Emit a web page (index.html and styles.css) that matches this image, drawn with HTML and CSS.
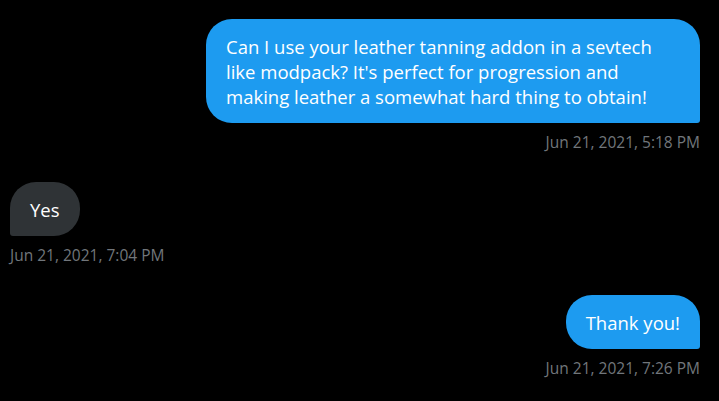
FILE: index.html
```html
<!DOCTYPE html>
<html lang="en">
<head>
    <meta charset="UTF-8">
    <meta name="viewport" content="width=device-width, initial-scale=1.0">
    <title>Messages</title>
    <link rel="stylesheet" href="styles.css">
</head>
<body>
<div class="conversation">
    <div class="message sent">
        <div class="bubble">Can I use your leather tanning addon in a sevtech like modpack? It's perfect for progression and making leather a somewhat hard thing to obtain!</div>
        <div class="time">Jun 21, 2021, 5:18 PM</div>
    </div>
    <div class="message received">
        <div class="bubble">Yes</div>
        <div class="time">Jun 21, 2021, 7:04 PM</div>
    </div>
    <div class="message sent">
        <div class="bubble">Thank you!</div>
        <div class="time">Jun 21, 2021, 7:26 PM</div>
    </div>
</div>
</body>
</html>
```

FILE: styles.css
```css
body {
    margin: 0;
    background: #000;
    font-family: "Open Sans", "Noto Sans", sans-serif;
}

.conversation {
    display: flex;
    flex-direction: column;
    gap: 30px;
    padding: 19px 19px 0 10px;
}

.message {
    display: flex;
    flex-direction: column;
    gap: 9px;
}

.sent {
    align-items: flex-end;
}

.received {
    align-items: flex-start;
}

.bubble {
    max-width: 454px;
    padding: 15px 20px 14px;
    font-size: 18.5px;
    line-height: 25px;
    color: #fff;
    border-radius: 26px;
}

.sent .bubble {
    background: #1d9bf0;
    border-bottom-right-radius: 3px;
}

.received .bubble {
    background: #2f3336;
    border-bottom-left-radius: 3px;
}

.time {
    font-size: 15.5px;
    line-height: 20px;
    color: #71767b;
}
```
